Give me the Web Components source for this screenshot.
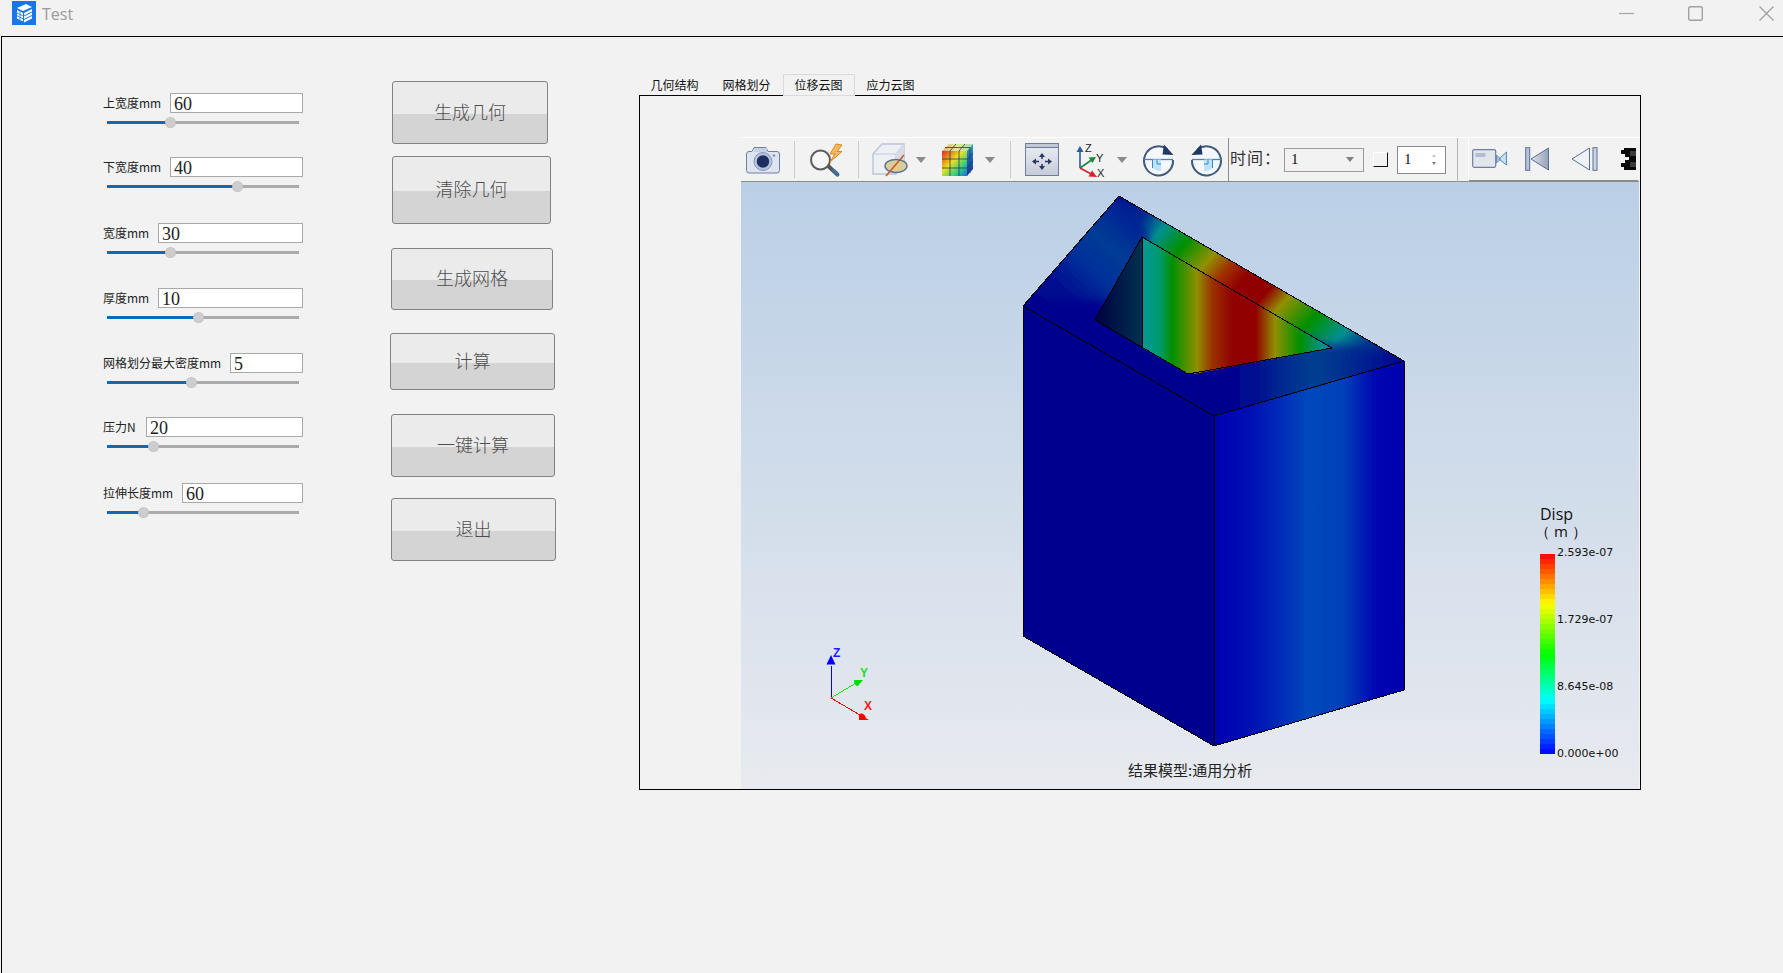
<!DOCTYPE html>
<html lang="zh"><head><meta charset="utf-8"><title>Test</title>
<style>
html,body{margin:0;padding:0;background:#f2f2f2;}
body{width:1783px;height:973px;overflow:hidden;font-family:"Noto Sans CJK SC","Noto Sans",sans-serif;}
</style></head><body>
<app-window>
  <title-bar slot="bar" caption="Test"></title-bar>
  <param-form slot="form">
    <param-row label="上宽度mm" lw="67" value="60" pct="33" gap="0"></param-row>
    <param-row label="下宽度mm" lw="67" value="40" pct="68" gap="28"></param-row>
    <param-row label="宽度mm" lw="55" value="30" pct="33" gap="30"></param-row>
    <param-row label="厚度mm" lw="55" value="10" pct="47.5" gap="29"></param-row>
    <param-row label="网格划分最大密度mm" lw="127" value="5" pct="44" gap="29"></param-row>
    <param-row label="压力N" lw="43" value="20" pct="24" gap="28"></param-row>
    <param-row label="拉伸长度mm" lw="79" value="60" pct="19" gap="30"></param-row>
  </param-form>
  <action-column slot="actions">
    <action-button ml="2" w="156" h="63" gap="0">生成几何</action-button>
    <action-button ml="2" w="159" h="68" gap="12">清除几何</action-button>
    <action-button ml="1" w="162" h="62" gap="24">生成网格</action-button>
    <action-button ml="0" w="165" h="57" gap="23">计算</action-button>
    <action-button ml="1" w="164" h="63" gap="24">一键计算</action-button>
    <action-button ml="1" w="165" h="63" gap="21">退出</action-button>
  </action-column>
  <tab-panel slot="panel">
    <result-toolbar></result-toolbar>
    <fem-view></fem-view>
  </tab-panel>
</app-window>
<script>
function shadow(el,html){const r=el.attachShadow({mode:'open'});r.innerHTML=html;return r;}
const A=(el,n,d)=>el.hasAttribute(n)?el.getAttribute(n):d;

customElements.define('app-window',class extends HTMLElement{connectedCallback(){if(this.shadowRoot)return;shadow(this,`<style>
:host{display:flex;flex-direction:column;width:1783px;height:973px;background:#f2f2f2;}
.main{flex:1;display:flex;align-items:flex-start;border-top:1px solid #000;border-left:1px solid #000;margin-left:1px;padding-left:101px;min-height:0;}
.form{width:200px;padding-top:56px;flex:none}
.actions{width:166px;margin-left:87px;padding-top:44px;flex:none}
.panel{margin-left:83px;padding-top:37px;flex:none}
</style><slot name="bar"></slot><div class="main"><div class="form"><slot name="form"></slot></div><div class="actions"><slot name="actions"></slot></div><div class="panel"><slot name="panel"></slot></div></div>`);}});

customElements.define('title-bar',class extends HTMLElement{connectedCallback(){if(this.shadowRoot)return;shadow(this,`<style>
:host{display:flex;align-items:center;height:36px;background:#f2f2f2;flex:none;font:16px "Open Sans",sans-serif;color:#9b9b9b;}
.logo{margin-left:12px;margin-top:-10px;width:24px;height:24px;flex:none}
.cap{margin-left:6px;margin-top:-8px}
.sp{flex:1}
svg.b{flex:none;margin-top:-10px;overflow:visible}
</style>
<svg class="logo" viewBox="0 0 24 24"><rect width="24" height="24" fill="#1a76e6"/><g fill="#fff"><path d="M5 7L14 3L20 6L11 10Z"/><path d="M5 9L11 12V20.500L5 17.500Z"/><path d="M12 12L20 8V10.500L12 14.500Z"/><path d="M12 15.500L20 11.500V14L12 18Z"/><path d="M12 19L20 15V17.500L12 21.500Z"/></g><path d="M5 12L11 15M5 14.800L11 17.800M8 10.500V19" stroke="#1a76e6" stroke-width=".8" fill="none"/></svg>
<span class="cap">${A(this,'caption','')}</span><span class="sp"></span>
<svg class="b" width="15" height="15" viewBox="0 0 15 15" style="margin-right:54px"><path d="M0 7.5H15" stroke="#a4a4a4" stroke-width="1.2"/></svg>
<svg class="b" width="15" height="15" viewBox="0 0 15 15" style="margin-right:56px"><rect x=".7" y=".7" width="13.6" height="13.6" rx="1.6" fill="none" stroke="#a0a0a0" stroke-width="1.4"/></svg>
<svg class="b" width="15" height="15" viewBox="0 0 15 15" style="margin-right:9px"><path d="M.5 .5L14.5 14.5M14.5 .5L.5 14.5" stroke="#a0a0a0" stroke-width="1.3"/></svg>`);}});

customElements.define('param-form',class extends HTMLElement{connectedCallback(){if(this.shadowRoot)return;shadow(this,`<style>:host{display:flex;flex-direction:column}</style><slot></slot>`);}});

customElements.define('param-row',class extends HTMLElement{connectedCallback(){if(this.shadowRoot)return;const p=+A(this,'pct',0);shadow(this,`<style>
:host{display:block;width:200px;margin-top:${A(this,'gap',0)}px;font:12px "Noto Sans CJK SC",sans-serif;color:#222;}
.top{display:flex;align-items:center;height:20px}
.lab{flex:none;width:${A(this,'lw',60)}px;white-space:nowrap;line-height:20px;letter-spacing:0}
.val{flex:1;box-sizing:border-box;height:20px;background:#fff;border:1px solid #a9a9a9;font:18px/20px "Liberation Serif",serif;color:#222;padding-left:3px;overflow:hidden}
.sl{position:relative;display:flex;align-items:center;height:16px;margin:1px 4px -1px}
.on{height:3px;background:#0f69b9;width:${p}%}
.off{height:3px;background:#ababab;flex:1}
.th{position:absolute;left:${p}%;top:50%;width:11px;height:11px;margin:-5.5px 0 0 -5.5px;border-radius:50%;background:#cdcdcd;border:.5px dotted #bbb;box-sizing:border-box}
</style><div class="top"><span class="lab">${A(this,'label','')}</span><div class="val">${A(this,'value','')}</div></div><div class="sl"><div class="on"></div><div class="off"></div><div class="th"></div></div>`);}});

customElements.define('action-column',class extends HTMLElement{connectedCallback(){if(this.shadowRoot)return;shadow(this,`<style>:host{display:flex;flex-direction:column;align-items:flex-start}</style><slot></slot>`);}});

customElements.define('action-button',class extends HTMLElement{connectedCallback(){if(this.shadowRoot)return;shadow(this,`<style>
:host{display:flex;box-sizing:border-box;align-items:center;justify-content:center;width:${A(this,'w',160)}px;height:${A(this,'h',60)}px;margin-left:${A(this,'ml',0)}px;margin-top:${A(this,'gap',0)}px;padding-bottom:4px;border:1px solid #828282;border-radius:3px;background:linear-gradient(#ebebeb 0 52%,#d4d4d4 52% 100%);font:18px "Liberation Serif","Noto Sans CJK SC",serif;font-weight:300;color:#4e4e4e;}
</style><slot></slot>`);}});

customElements.define('tab-panel',class extends HTMLElement{connectedCallback(){if(this.shadowRoot)return;const t=['几何结构','网格划分','位移云图','应力云图'];shadow(this,`<style>
:host{display:block;width:1002px;font:12px "Noto Sans CJK SC",sans-serif;color:#111;}
.tabs{display:flex;height:22px;margin-bottom:-1px;position:relative}
.t{width:72px;height:22px;box-sizing:border-box;display:flex;align-items:center;justify-content:center;padding:0 1px 1px 0}
.t.s{border:1px solid #dadada;border-bottom:1px solid #dadada;background:#f2f2f2;padding:0 1px 1px 0}
.box{box-sizing:border-box;width:1002px;height:695px;border:1px solid #000;background:#f2f2f2;padding:41px 0 0 101px;display:flex;flex-direction:column}
</style><div class="tabs">${t.map((x,i)=>`<div class="t${i==2?' s':''}">${x}</div>`).join('')}</div><div class="box"><slot></slot></div>`);}});

const rot=(flip)=>`<g ${flip?'transform="translate(31 0) scale(-1 1)"':''}><circle cx="15.5" cy="16" r="14.500" fill="#f5f7fa" stroke="none"/><path d="M24.500 5.500A14.500 14.500 0 1 0 30 16" fill="none" stroke="#3f5a7a" stroke-width="2"/><path d="M1 15.500H30" stroke="#2e8ccf" stroke-width="1.3"/><path d="M9.500 15.500H18V27.500Q13 27 9.500 24Z" fill="#bfe2f4"/><path d="M9.500 15.500V24M14 15.500V20H18" stroke="#2e8ccf" stroke-width="1" fill="none"/><path d="M21 0.500L30.500 11L19.500 10.500Z" fill="#1d3a66"/></g>`;
const ICONS={
camera:[34,28,`<path d="M6 5.5L8 1.5H20L22 5.5H31Q33.5 5.5 33.5 8V24.5Q33.5 27 31 27H3Q.5 27 .5 24.5V8Q.5 5.5 3 5.5Z" fill="#dfe5f0" stroke="#6d80a3"/><rect x="8" y="2" width="13" height="4" fill="#c6d0e2"/><circle cx="17" cy="15.5" r="9" fill="#b4c4de" stroke="#8496b6"/><circle cx="17" cy="15.5" r="6.2" fill="#1d2f62"/><circle cx="28" cy="9.5" r="1.2" fill="#7d8fb0"/>`],
mag:[34,32,`<path d="M19 23L29 30" stroke="#555" stroke-width="4" stroke-linecap="round" transform="rotate(8 24 26)"/><path d="M24.500 26.500L28.500 30" stroke="#3f6f9f" stroke-width="3.500" stroke-linecap="round"/><circle cx="11.500" cy="16" r="9.500" fill="#f6f6f6" stroke="#5c5c5c" stroke-width="2"/><path d="M27 0L21 10L26 10L21 18L33 7.5L28 7.5L33 1Z" fill="#f2b764" stroke="#dc8a1c" stroke-width="1"/>`],
cube:[35,33,`<path d="M1 11L10 1H32V22L24 31H1Z" fill="#eceff4" stroke="#bcc5d6" stroke-width="1.4"/><path d="M1 11H24V31M24 11L32 1" fill="none" stroke="#c4ccdb" stroke-width="1.2"/><path d="M24 11L32 1V22L24 31Z" fill="#d6dbe5"/><ellipse cx="24" cy="23" rx="11" ry="6.5" fill="#d8d09c" stroke="#60728f" stroke-width="1.4"/><ellipse cx="24" cy="23" rx="4" ry="3.5" fill="#e9c888"/><path d="M14 33L32 12" stroke="#c2592c" stroke-width="1.5"/>`],
color:[31,33,`<defs><linearGradient id="cf" x1="0" y1="0" x2="1" y2="1"><stop offset="0" stop-color="#e02a1c"/><stop offset=".42" stop-color="#eadf20"/><stop offset=".72" stop-color="#30cf80"/><stop offset="1" stop-color="#1a70d8"/></linearGradient><linearGradient id="ct" x1="0" y1="0" x2="1" y2="0"><stop offset="0" stop-color="#f0a878"/><stop offset=".5" stop-color="#e7e59c"/><stop offset="1" stop-color="#a0dcb4"/></linearGradient><linearGradient id="cr" x1="0" y1="0" x2="0" y2="1"><stop offset="0" stop-color="#2fa8b0"/><stop offset=".5" stop-color="#1d5fc0"/><stop offset="1" stop-color="#14309a"/></linearGradient></defs><path d="M0 8L7 1H31L25 8Z" fill="url(#ct)"/><rect x="0" y="8" width="25" height="25" fill="url(#cf)"/><path d="M25 8L31 1V26L25 33Z" fill="url(#cr)"/><path d="M8 8V33M17 8V33M0 16H25M0 25H25M8 8L14 1M17 8L23 1M3 4.5H28M28 4.5V29.5M25 17L31 10M25 25L31 18" stroke="#2a3a58" stroke-width=".8" fill="none"/>`],
fit:[34,33,`<defs><linearGradient id="fg" x1="0" y1="0" x2="0" y2="1"><stop offset="0" stop-color="#eceef3"/><stop offset="1" stop-color="#c7cbd8"/></linearGradient></defs><rect x=".5" y=".5" width="33" height="32" fill="url(#fg)" stroke="#6d7f9f"/><rect x=".5" y=".5" width="33" height="4" fill="#c0c8da" stroke="#6d7f9f"/><g fill="#23375f"><path d="M17 10L14 14H20ZM17 27L14 23H20ZM7 18.5L11 15.5V21.5ZM27 18.5L23 15.5V21.5Z"/></g><path d="M17 14V16M17 21V23M11 18.5H14M20 18.5H23" stroke="#23375f" stroke-width="1.5"/>`],
axes:[30,36,`<text x="9" y="10" font-family="Liberation Sans,sans-serif" font-size="11" fill="#222">Z</text><text x="20" y="20" font-family="Liberation Sans,sans-serif" font-size="11" fill="#222">Y</text><text x="21" y="35" font-family="Liberation Sans,sans-serif" font-size="11" fill="#222">X</text><path d="M4 26V8" stroke="#2a59a8" stroke-width="1.6"/><path d="M4 4L0.5 10H7.5Z" fill="#2a59a8"/><path d="M4 26L17 17" stroke="#1c8a3c" stroke-width="1.6"/><path d="M20 15L12.5 15.5L16.5 21Z" fill="#1c8a3c"/><path d="M4 26L17 33" stroke="#d8202a" stroke-width="1.6"/><path d="M21 35L12.5 34.5L16 28.5Z" fill="#d8202a"/>`],
rotr:[31,31,rot(false)],
rotl:[31,31,rot(true)],
video:[35,19,`<rect x=".7" y=".7" width="23" height="17.6" rx="1.5" fill="#e2e5ec" stroke="#6d7f9f" stroke-width="1.2"/><rect x="3.500" y="4" width="10" height="4" fill="#b3bdd0"/><path d="M24.500 6L27.500 9V11L24.500 14Z" fill="#9fc4dc" stroke="#5b7da0" stroke-width=".8"/><path d="M28 9L34.500 3V16L28 11Z" fill="#c8e0ee" stroke="#4f8fbd"/>`],
first:[24,24,`<rect x=".7" y=".7" width="4" height="22.6" fill="#b9c3d6" stroke="#56709a"/><defs><linearGradient id="fi" x1="0" x2="1" y1="0" y2="0"><stop offset="0" stop-color="#dfe3ea"/><stop offset="1" stop-color="#96a2b6"/></linearGradient></defs><path d="M6 12L23.5 1V23Z" fill="url(#fi)" stroke="#56709a"/>`],
prev:[27,24,`<path d="M1 12L18.5 1V23Z" fill="#eef1f5" stroke="#56709a"/><rect x="22" y=".7" width="4" height="22.6" fill="#cfd6e2" stroke="#56709a"/>`],
part:[15,22,`<path d="M0 2H3V0H15V22H3V19H0V15H4V12H8V9H4V6H0Z" fill="#0a0a0a"/><path d="M0 6H4V15H0Z" fill="#f2f2f2"/><path d="M9 3H15V8H9ZM9 14H15V19H9Z" fill="#3a3a3a"/>`]
};
customElements.define('tool-icon',class extends HTMLElement{connectedCallback(){if(this.shadowRoot)return;const [w,h,b]=ICONS[A(this,'name','camera')];shadow(this,`<style>:host{display:block;flex:none;width:${w}px;height:${h}px;margin-left:${A(this,'ml',0)}px;}svg{display:block;overflow:visible}</style><svg width="${w}" height="${h}" viewBox="0 0 ${w} ${h}">${b}</svg>`);}});

customElements.define('result-toolbar',class extends HTMLElement{connectedCallback(){if(this.shadowRoot)return;
const ic=(n,ml)=>`<tool-icon name="${n}" ml="${ml}"></tool-icon>`;
const sep=(ml,c='#c9c9c9',h=37)=>`<i class="sep" style="margin-left:${ml}px;background:${c};height:${h}px"></i>`;
const dd=(ml)=>`<i class="dd" style="margin-left:${ml}px"></i>`;
shadow(this,`<style>
:host{display:flex;align-items:center;flex:none;box-sizing:border-box;height:45px;width:898px;background:#f2f2f2;border-top:1px solid #fff;border-bottom:1px solid #8c8c8c;}
.sep{display:block;flex:none;width:1px}
.dd{display:block;flex:none;width:0;height:0;border:5px solid transparent;border-top:6px solid #8a8a8a;border-bottom:0}
.lab{flex:none;margin-left:1px;width:43px;font:16px/18px "Liberation Serif","Noto Sans CJK SC",serif;color:#333;white-space:nowrap;letter-spacing:1px;padding-bottom:1px}
.combo{flex:none;box-sizing:border-box;width:80px;height:24px;margin-left:11px;border:1px solid #9a9a9a;display:flex;align-items:center;padding:0 9px 0 6px;font:15px "Liberation Serif",serif;color:#111;justify-content:space-between}
.combo b{display:block;width:0;height:0;border:4px solid transparent;border-top:5px solid #7f7f7f;border-bottom:0}
.chk{flex:none;box-sizing:border-box;width:15px;height:15px;margin-left:9px;border:1px solid;border-color:#fff #111 #111 #fff}
.spin{flex:none;box-sizing:border-box;width:49px;height:28px;margin-left:9px;border:1px solid #8a8a8a;background:#fff;display:flex;align-items:center;justify-content:space-between;padding:0 9px 0 6px;font:15px "Liberation Serif",serif;color:#111}
.arr{display:flex;flex-direction:column;gap:5px}
.arr i{display:block;width:0;height:0;border:2.5px solid transparent}
.arr i:first-child{border-bottom:3.5px solid #c4c4c4;border-top:0}
.arr i:last-child{border-top:3.5px solid #7f7f7f;border-bottom:0}
.t2{flex:none;display:flex;align-items:center;box-sizing:border-box;width:170px;height:44px;margin-left:10px;border-left:1px solid #fff;margin-top:-1px;overflow:hidden;border-bottom:2px solid #8c8c8c;margin-bottom:-1px}
</style>
${ic('camera',5)}${sep(14)}${ic('mag',14)}${sep(15)}${ic('cube',13)}${dd(9)}${ic('color',16)}${dd(12)}${sep(15)}${ic('fit',14)}${ic('axes',17)}${dd(11)}${ic('rotr',16)}${ic('rotl',17)}${sep(6,'#8c8c8c',44)}
<span class="lab">时间：</span><div class="combo">1<b></b></div><div class="chk"></div><div class="spin">1<div class="arr"><i></i><i></i></div></div>${sep(11,'#b4b4b4',44)}
<div class="t2">${ic('video',3)}${ic('first',18)}${ic('prev',22)}${ic('part',23)}</div>`);}});

customElements.define('fem-view',class extends HTMLElement{connectedCallback(){if(this.shadowRoot)return;
const rb=t=>{const s=[[0,[0,0,255]],[.27,[0,255,255]],[.5,[0,255,0]],[.75,[255,255,0]],[1,[255,0,0]]];for(let i=1;i<s.length;i++)if(t<=s[i][0]){const k=(t-s[i-1][0])/(s[i][0]-s[i-1][0]);return 'rgb('+s[i][1].map((c,j)=>Math.round(s[i-1][1][j]+(c-s[i-1][1][j])*k)).join(',')+')';}};
const N=40;let st=[];for(let i=0;i<N;i++){st.push(`${rb(1-(i+.5)/N)} ${i/N*100}% ${(i+1)/N*100}%`);}
const stops=a=>a.map(([o,c])=>`<stop offset="${o}" stop-color="${c}"/>`).join('');
shadow(this,`<style>
:host{display:block;position:relative;box-sizing:border-box;width:898px;height:607px;background:linear-gradient(#bacfe6,#e8eaef);overflow:hidden;font-family:"DejaVu Sans",sans-serif;color:#111}
svg{position:absolute;left:0;top:0}
.cap{position:absolute;left:387px;top:579px;font:15px/18px "Noto Sans CJK SC",sans-serif;color:#222;white-space:nowrap}
.disp{position:absolute;left:799px;top:324px;font:16px/17px "Open Sans",sans-serif;color:#111;white-space:nowrap}
.disp span{display:block}
.disp span+span{margin-left:-5px;font-size:15px;line-height:17px}
.bar{position:absolute;left:799px;top:372px;width:15px;height:200px;background:linear-gradient(${st.join(',')})}
.v{position:absolute;left:816px;font-size:11px;line-height:14px;white-space:nowrap;color:#111}
</style>
<svg width="898" height="607" viewBox="741 182 898 607">
<defs>
<linearGradient id="band" gradientUnits="userSpaceOnUse" x1="1119" y1="196" x2="1364" y2="407">${stops([[0,'#00108f'],[.1,'#002a90'],[.167,'#009090'],[.25,'#009000'],[.34,'#909000'],[.4,'#a03000'],[.46,'#900000'],[.54,'#900000'],[.6,'#909000'],[.7,'#009000'],[.8,'#009090'],[.87,'#004090'],[1,'#000c90']])}</linearGradient>
<linearGradient id="hole" gradientUnits="userSpaceOnUse" x1="1142" y1="0" x2="1332" y2="0">${stops([[0,'#009898'],[.09,'#009a70'],[.16,'#009000'],[.29,'#908f00'],[.37,'#9a3000'],[.48,'#900000'],[.6,'#920000'],[.7,'#909000'],[.83,'#009000'],[.95,'#008f8f'],[1,'#008f90']])}</linearGradient>
<linearGradient id="inner" gradientUnits="userSpaceOnUse" x1="1095" y1="0" x2="1142" y2="0">${stops([[0,'#000040'],[1,'#003050']])}</linearGradient>
<linearGradient id="left" gradientUnits="userSpaceOnUse" x1="1119" y1="196" x2="1023" y2="306">${stops([[0,'#001c94'],[.3,'#003c96'],[.5,'#00309a'],[.75,'#000c90'],[1,'#00008e']])}</linearGradient>
<linearGradient id="front" gradientUnits="userSpaceOnUse" x1="1190" y1="0" x2="1400" y2="0">${stops([[0,'#00008e'],[.29,'#00088f'],[.44,'#002a90'],[.6,'#004090'],[.76,'#002a90'],[.93,'#001090'],[1,'#000f8f']])}</linearGradient>
<linearGradient id="right" gradientUnits="userSpaceOnUse" x1="1214" y1="0" x2="1404" y2="0">${stops([[0,'#0000b0'],[.2,'#0010b4'],[.5,'#0048bc'],[.68,'#0040b8'],[.85,'#0006b2'],[1,'#0000ae']])}</linearGradient>
<clipPath id="tc"><polygon points="1119,196 1404,361 1214,416 1023,306"/></clipPath>
<filter id="bl" x="-20%" y="-20%" width="140%" height="140%"><feGaussianBlur stdDeviation="4"/></filter>
</defs>
<polygon points="1023,306 1214,416 1214,746 1023,636" fill="#00008e"/>
<polygon points="1214,416 1404,361 1404,690 1214,746" fill="url(#right)"/>
<g clip-path="url(#tc)">
<polygon points="1119,196 1404,361 1214,416 1023,306" fill="url(#band)"/>
<polygon points="1100,180 1000,300 1100,340 1150,300 1148,232" fill="url(#left)" filter="url(#bl)"/>
<polygon points="1080,300 1000,300 1214,440 1430,375 1400,352 1328,344 1250,320" fill="url(#front)" filter="url(#bl)"/>
</g>
<polygon points="1142,237 1095,320 1142,348" fill="url(#inner)"/>
<polygon points="1142,237 1142,348 1188,374 1194,374 1332,348" fill="url(#hole)"/>
<g fill="none" stroke="#000" stroke-width="1" shape-rendering="crispEdges">
<polygon points="1119,196 1404,361 1404,690 1214,746 1023,636 1023,306"/>
<path d="M1023,306 L1214,416 L1404,361 M1214,416 V746"/>
<path d="M1142,237 L1332,348 L1188,374 L1095,320 Z M1142,237 V348"/>
</g>
<g shape-rendering="crispEdges" fill="none" stroke-width="1">
<path d="M831,698 V666" stroke="#0000ff"/><path d="M831,698 L856,683" stroke="#00ee00"/><path d="M831,698 L860,715" stroke="#ff0000"/>
</g>
<path d="M831,655 L826.500,664.500 H835.500 Z" fill="#0000ff"/><path d="M854,680 H863 L858,686 Q854,686 854,680Z" fill="#00e000"/><path d="M859,714 L869,720 H859 Z M859,714 Q864,712 866,718 L860,720Z" fill="#ff0000"/>
<g font-family="Liberation Sans,sans-serif" font-weight="700" font-size="12">
<text x="833" y="657" fill="#1a1aff">Z</text><text x="860" y="677" fill="#1ee01e">Y</text><text x="864" y="710" fill="#ff1a1a">X</text>
</g>
</svg>
<div class="cap">结果模型:通用分析</div>
<div class="disp"><span>Disp</span><span>（ m ）</span></div>
<div class="bar"></div>
<div class="v" style="top:364px">2.593e-07</div><div class="v" style="top:431px">1.729e-07</div><div class="v" style="top:498px">8.645e-08</div><div class="v" style="top:565px">0.000e+00</div>`);}});
</script>
</body></html>
